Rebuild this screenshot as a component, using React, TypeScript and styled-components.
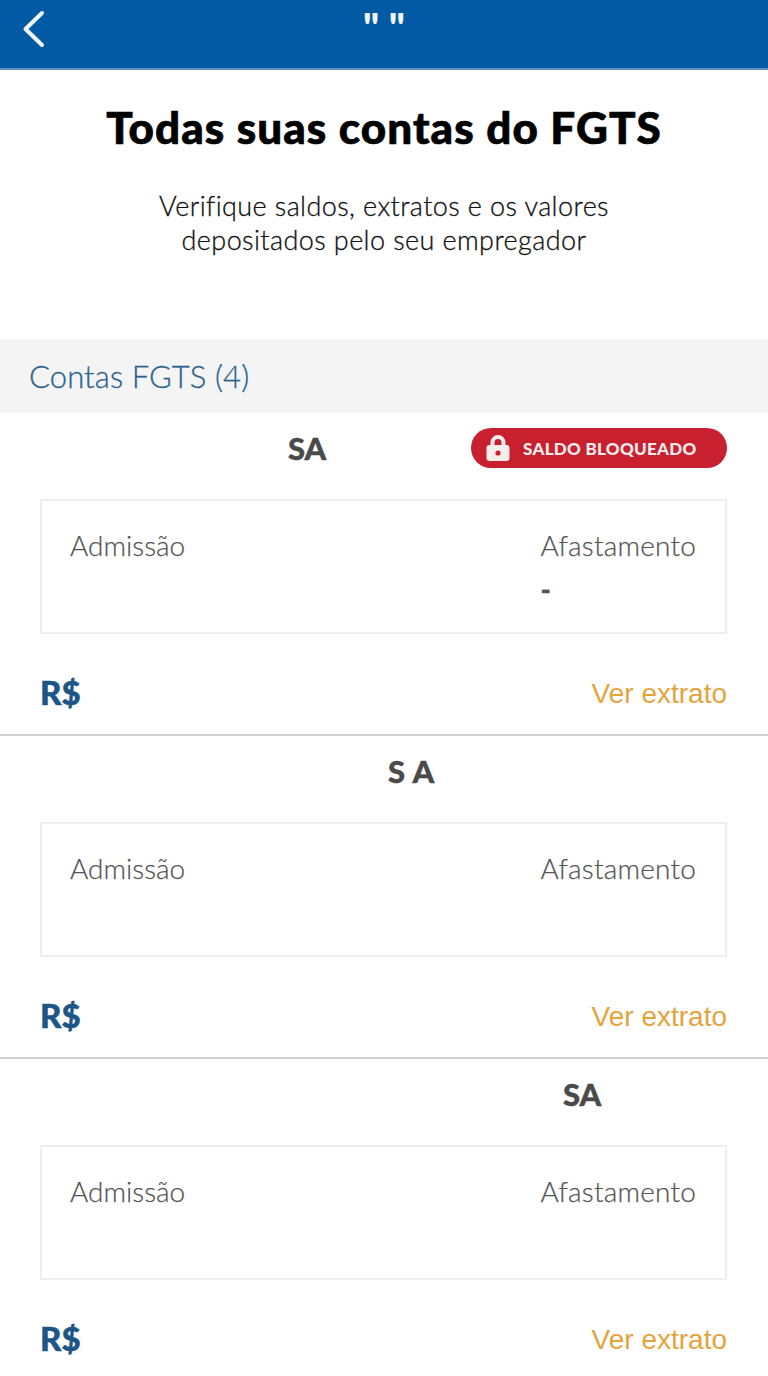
import React from 'react';
import styled, { createGlobalStyle } from 'styled-components';

const GlobalStyle = createGlobalStyle`
  html, body {
    margin: 0;
    padding: 0;
    background: #fff;
    font-family: "Lato", "Liberation Sans", sans-serif;
  }
  * { box-sizing: border-box; }
`;

const Page = styled.div`
  width: 768px;
  height: 1376px;
  overflow: hidden;
  background: #fff;
`;

const TopBar = styled.header`
  height: 70px;
  background: #025aa5;
  border-bottom: 2px solid #5f8fbd;
  display: grid;
  grid-template-columns: 64px 1fr 64px;
`;

const BackButton = styled.button`
  border: 0;
  background: none;
  padding: 0 0 0 21px;
  color: #f2f6fa;
  height: 58px;
  display: flex;
  align-items: center;
`;

const TopTitle = styled.div`
  color: #f2f6fa;
  font-size: 40px;
  font-weight: 900;
  line-height: 40px;
  text-align: center;
  padding-top: 7px;
`;

const Intro = styled.section`
  height: 269px;
  padding-top: 31px;
  text-align: center;
`;

const Title = styled.h1`
  margin: 0;
  font-size: 44px;
  line-height: 52px;
  font-weight: 900;
  color: #000;
  letter-spacing: 1.05px;
  -webkit-text-stroke: 0.7px #000;
`;

const Subtitle = styled.p`
  margin: 36px 0 0;
  font-size: 27px;
  line-height: 34px;
  font-weight: 300;
  color: #111;
  letter-spacing: 0.4px;
  -webkit-text-stroke: 0.3px #111;
`;

const SectionBand = styled.div`
  height: 74px;
  background: #f4f4f4;
  padding-left: 29px;
  display: flex;
  align-items: center;
  font-size: 31px;
  font-weight: 300;
  color: #2a628f;
  letter-spacing: 0.1px;
  -webkit-text-stroke: 0.3px #2a628f;
`;

const Account = styled.article`
  height: 323px;
  padding: 15px 41px 0 40px;
  border-bottom: 2px solid #d0d0d0;

  &:last-child {
    border-bottom: 0;
  }
`;

const NameRow = styled.div`
  height: 40px;
  display: flex;
  align-items: center;
  justify-content: space-between;
`;

const Name = styled.span<{ $indent: number; $spaced?: boolean }>`
  margin-left: ${p => p.$indent}px;
  font-size: 31px;
  font-weight: 900;
  color: #4a4a4a;
  letter-spacing: ${p => (p.$spaced ? '0.5px' : '0')};
  -webkit-text-stroke: 0.4px #4a4a4a;
`;

const BlockedPill = styled.div`
  width: 256px;
  height: 40px;
  border-radius: 20px;
  background: #c9202f;
  color: #f8eced;
  display: flex;
  align-items: center;
  gap: 13px;
  padding-left: 15px;
  font-size: 17px;
  font-weight: 900;
  letter-spacing: 0.3px;
`;

const DatesBox = styled.div`
  height: 135px;
  margin-top: 31px;
  border: 2px solid #eeeeee;
  padding: 27px 29px 0 28px;
  display: flex;
  justify-content: space-between;
  color: #555;
  font-size: 28px;
  font-weight: 300;
  -webkit-text-stroke: 0.25px #555;
`;

const DateColumn = styled.div<{ $spacing?: number }>`
  display: flex;
  flex-direction: column;
  letter-spacing: ${p => p.$spacing ?? 0}px;
`;

const DateValue = styled.span`
  font-weight: 900;
  line-height: 54px;
`;

const FooterRow = styled.div`
  margin-top: 37px;
  display: flex;
  align-items: center;
  justify-content: space-between;
  height: 44px;
`;

const Amount = styled.span`
  font-size: 33px;
  font-weight: 900;
  color: #1c5586;
  padding-bottom: 3px;
  -webkit-text-stroke: 0.5px #1c5586;
`;

const StatementLink = styled.a`
  font-family: "Liberation Sans", Arial, sans-serif;
  font-size: 28px;
  color: #e4a33c;
  padding-top: 2px;
`;

const accounts = [
  { indent: 248, spaced: false, blocked: true, leave: '-' },
  { indent: 348, spaced: true, blocked: false, leave: '' },
  { indent: 523, spaced: false, blocked: false, leave: '' },
];

export default function App() {
  return (
    <Page>
      <GlobalStyle />
      <TopBar>
        <BackButton aria-label="Voltar">
          <svg width="24" height="38" viewBox="0 0 24 38" fill="none">
            <path
              d="M21 3 4.5 19 21 35"
              stroke="currentColor"
              strokeWidth="4"
              strokeLinecap="round"
              strokeLinejoin="round"
            />
          </svg>
        </BackButton>
        <TopTitle>" "</TopTitle>
        <span />
      </TopBar>
      <Intro>
        <Title>Todas suas contas do FGTS</Title>
        <Subtitle>
          Verifique saldos, extratos e os valores
          <br />
          depositados pelo seu empregador
        </Subtitle>
      </Intro>
      <SectionBand>Contas FGTS (4)</SectionBand>
      {accounts.map(account => (
        <Account key={account.indent}>
          <NameRow>
            <Name $indent={account.indent} $spaced={account.spaced}>
              {account.spaced ? 'S A' : 'SA'}
            </Name>
            {account.blocked && (
              <BlockedPill>
                <svg width="24" height="26" viewBox="0 0 24 26" fill="none">
                  <path d="M6.5 12V7.5a5.5 5.5 0 0 1 11 0V12" stroke="#f8eced" strokeWidth="4" />
                  <rect x="0.5" y="10" width="23" height="16" rx="3" fill="#f8eced" />
                  <circle cx="12" cy="18" r="2.6" fill="#c9202f" />
                </svg>
                SALDO BLOQUEADO
              </BlockedPill>
            )}
          </NameRow>
          <DatesBox>
            <DateColumn>Admissão</DateColumn>
            <DateColumn $spacing={0.2}>
              Afastamento
              <DateValue>{account.leave}</DateValue>
            </DateColumn>
          </DatesBox>
          <FooterRow>
            <Amount>R$</Amount>
            <StatementLink>Ver extrato</StatementLink>
          </FooterRow>
        </Account>
      ))}
    </Page>
  );
}
